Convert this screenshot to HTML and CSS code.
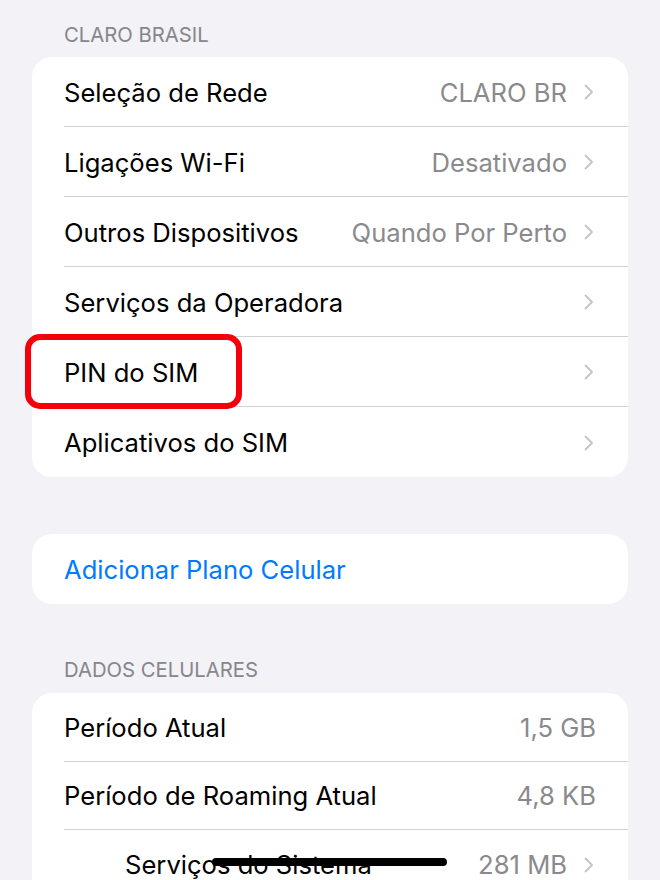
FILE: index.html
```html
<!DOCTYPE html>
<html lang="pt-BR">
<head>
<meta charset="utf-8">
<title>Celular</title>
<link rel="stylesheet" href="styles.css">
</head>
<body>
<div class="page">
  <div class="section-header first">CLARO BRASIL</div>
  <div class="card">
    <div class="row"><span class="label">Seleção de Rede</span><span class="value">CLARO BR</span><svg class="chev" viewBox="0 0 10 16"><path d="M1.5 1.5 L8 8 L1.5 14.5"/></svg></div>
    <div class="row"><span class="label">Ligações Wi-Fi</span><span class="value">Desativado</span><svg class="chev" viewBox="0 0 10 16"><path d="M1.5 1.5 L8 8 L1.5 14.5"/></svg></div>
    <div class="row"><span class="label">Outros Dispositivos</span><span class="value">Quando Por Perto</span><svg class="chev" viewBox="0 0 10 16"><path d="M1.5 1.5 L8 8 L1.5 14.5"/></svg></div>
    <div class="row"><span class="label">Serviços da Operadora</span><span class="value"></span><svg class="chev" viewBox="0 0 10 16"><path d="M1.5 1.5 L8 8 L1.5 14.5"/></svg></div>
    <div class="row"><span class="label">PIN do SIM</span><span class="value"></span><svg class="chev" viewBox="0 0 10 16"><path d="M1.5 1.5 L8 8 L1.5 14.5"/></svg></div>
    <div class="row"><span class="label">Aplicativos do SIM</span><span class="value"></span><svg class="chev" viewBox="0 0 10 16"><path d="M1.5 1.5 L8 8 L1.5 14.5"/></svg></div>
  </div>

  <div class="card single">
    <div class="row"><span class="label link">Adicionar Plano Celular</span></div>
  </div>

  <div class="section-header">DADOS CELULARES</div>
  <div class="card tight">
    <div class="row"><span class="label">Período Atual</span><span class="value">1,5 GB</span></div>
    <div class="row"><span class="label">Período de Roaming Atual</span><span class="value">4,8 KB</span></div>
    <div class="row indent"><span class="label">Serviços do Sistema</span><span class="value">281 MB</span><svg class="chev" viewBox="0 0 10 16"><path d="M1.5 1.5 L8 8 L1.5 14.5"/></svg></div>
  </div>

  <div class="highlight"></div>
  <div class="home-indicator"></div>
</div>
</body>
</html>
```
FILE: styles.css
```css
html, body {
  margin: 0;
  padding: 0;
  background: #f2f2f7;
}
body {
  font-family: "Inter", "Liberation Sans", Arial, sans-serif;
  -webkit-font-smoothing: antialiased;
}
.page {
  position: relative;
  width: 660px;
  height: 880px;
  overflow: hidden;
}
.section-header {
  padding: 0 64px;
  height: 24px;
  line-height: 24px;
  margin: 0 0 10px;
  font-size: 20.3px;
  color: #86868b;
  letter-spacing: 0;
}
.section-header.first {
  margin-top: 23px;
}
.card {
  margin: 0 32px;
  background: #ffffff;
  border-radius: 20px;
  overflow: hidden;
}
.card + .card {
  margin-top: 57px;
}
.card.single + .section-header {
  margin-top: 54px;
}
.card.single + .section-header + .card {
  margin-top: 11px;
}
.row {
  display: flex;
  align-items: center;
  height: 70px;
  margin-left: 32px;
  padding-right: 32px;
  padding-top: 1px;
  border-bottom: 1px solid #d1d1d6;
  box-sizing: border-box;
}
.row:last-child {
  border-bottom: none;
}
.card.tight .row {
  height: 68.5px;
}
.row.indent {
  padding-left: 61px;
}
.label {
  flex: 1;
  font-size: 25.6px;
  color: #000;
  white-space: nowrap;
}
.label.link {
  color: #007aff;
}
.value {
  font-size: 25.6px;
  color: #8a8a8e;
  white-space: nowrap;
}
.chev {
  width: 10px;
  height: 16px;
  margin-left: 17px;
  margin-right: 2px;
  fill: none;
  stroke: #c4c4c7;
  stroke-width: 1.8;
  stroke-linecap: round;
  stroke-linejoin: round;
}
.highlight {
  position: absolute;
  left: 25px;
  top: 334px;
  width: 217px;
  height: 75px;
  box-sizing: border-box;
  border: 6px solid #f5000a;
  border-radius: 15px;
}
.home-indicator {
  position: absolute;
  left: 212px;
  top: 858px;
  width: 235px;
  height: 8px;
  border-radius: 4px;
  background: #000;
}
```
